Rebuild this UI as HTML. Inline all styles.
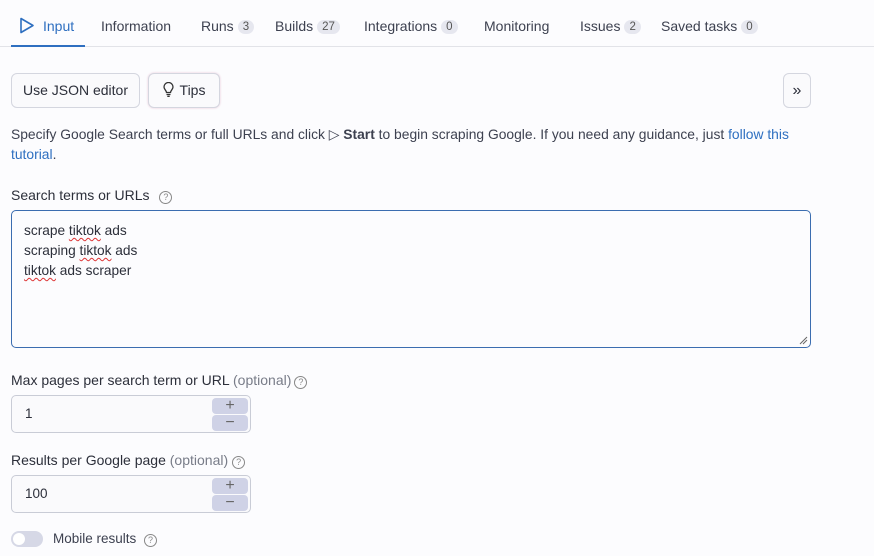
<!DOCTYPE html>
<html><head><style>
*{box-sizing:border-box;margin:0;padding:0}
body{width:874px;height:556px;background:#fcfcfe;font-family:"Liberation Sans",sans-serif;color:#2c2f3a;position:relative;overflow:hidden}
.a{position:absolute;white-space:nowrap}
.tab{font-size:14px;top:18px;color:#3d4150}
.b{display:inline-block;background:#e6e7ef;border-radius:8px;font-size:11.5px;padding:1px 5px;color:#555;margin-left:4px;vertical-align:1px}
.btn{border:1px solid #d4d6df;border-radius:6px;background:#fafafc;font-size:14px;height:35px;line-height:33px;text-align:center}
.lbl{font-size:14px;color:#2c2f3a}
.opt{color:#787c88}
.q{display:inline-block;width:13px;height:13px;border:1.3px solid #888;border-radius:50%;font-size:9px;line-height:11px;text-align:center;color:#888;vertical-align:0px;margin-left:4px}
.num{border:1px solid #c9ccd6;border-radius:5px;width:240px;height:38px;background:#fafafc}
.pm{position:absolute;right:2px;width:36px;height:16px;background:#cfd2e6;border-radius:4px;text-align:center;font-size:16px;line-height:15px;color:#666}
.sq{text-decoration:underline wavy #d33;text-decoration-thickness:1px;text-underline-offset:2px}
</style></head><body>
<svg class="a" style="left:19px;top:17px" width="16" height="17" viewBox="0 0 16 17"><path d="M2 1.5 L14 8.5 L2 15.5 Z" fill="none" stroke="#2e6fc0" stroke-width="1.6" stroke-linejoin="round"/></svg>
<div class="a tab" style="left:43px;color:#2e6fc0">Input</div>
<div class="a tab" style="left:101px">Information</div>
<div class="a tab" style="left:201px">Runs<span class="b">3</span></div>
<div class="a tab" style="left:275px">Builds<span class="b">27</span></div>
<div class="a tab" style="left:364px">Integrations<span class="b">0</span></div>
<div class="a tab" style="left:484px">Monitoring</div>
<div class="a tab" style="left:580px">Issues<span class="b">2</span></div>
<div class="a tab" style="left:661px">Saved tasks<span class="b">0</span></div>
<div class="a" style="left:0;top:46px;width:874px;height:1px;background:#e2e3e8"></div>
<div class="a" style="left:11px;top:45px;width:74px;height:2px;background:#2e6fc0"></div>

<div class="a btn" style="left:11px;top:73px;width:129px">Use JSON editor</div>
<div class="a btn" style="left:148px;top:73px;width:72px;box-shadow:0 0 2px #e8c8d8"><svg style="vertical-align:-2px;margin-right:6px" width="11" height="15" viewBox="0 0 11 15"><path d="M3.5 10.5 C3.5 8.5 1 7.5 1 5 A4.5 4.5 0 0 1 10 5 C10 7.5 7.5 8.5 7.5 10.5 Z M3.5 12.5 H7.5 M4.3 14.3 H6.7" fill="none" stroke="#333" stroke-width="1.3"/></svg>Tips</div>
<div class="a btn" style="left:783px;top:73px;width:28px;font-size:16px">»</div>

<div class="a" style="left:11px;top:126px;font-size:13.85px;color:#3d4150">Specify Google Search terms or full URLs and click ▷ <b>Start</b> to begin scraping Google. If you need any guidance, just <span style="color:#2e6fc0">follow this</span></div>
<div class="a" style="left:11px;top:146px;font-size:13.85px;color:#3d4150"><span style="color:#2e6fc0">tutorial</span>.</div>

<div class="a lbl" style="left:11px;top:187px">Search terms or URLs <span class="q" style="margin-left:6px">?</span></div>
<div class="a" style="left:11px;top:210px;width:800px;height:138px;border:1px solid #3b6db0;border-radius:5px;background:#fcfcfe"></div>
<div class="a" style="left:24px;top:221px;font-size:13.7px;line-height:20px;color:#2c2f3a">scrape <span class="sq">tiktok</span> ads<br>scraping <span class="sq">tiktok</span> ads<br><span class="sq">tiktok</span> ads scraper</div>
<svg class="a" style="left:798px;top:335px" width="10" height="10"><path d="M2 9 L9 2 M5 9 L9 5" stroke="#666" stroke-width="1"/></svg>

<div class="a lbl" style="left:11px;top:372px">Max pages per search term or URL <span class="opt">(optional)</span><span class="q" style="margin-left:3px">?</span></div>
<div class="a num" style="left:11px;top:395px"><div class="a" style="left:13px;top:10px;font-size:13.5px">1</div><div class="pm" style="top:2px">+</div><div class="pm" style="top:19px">−</div></div>

<div class="a lbl" style="left:11px;top:452px">Results per Google page <span class="opt">(optional)</span><span class="q">?</span></div>
<div class="a num" style="left:11px;top:475px"><div class="a" style="left:13px;top:10px;font-size:13.5px">100</div><div class="pm" style="top:2px">+</div><div class="pm" style="top:19px">−</div></div>

<div class="a" style="left:11px;top:531px;width:32px;height:16px;border-radius:8px;background:#d6d8e6"><div class="a" style="left:2px;top:2px;width:12px;height:12px;border-radius:50%;background:#fff"></div></div>
<div class="a" style="left:53px;top:531px;font-size:13.5px;color:#3d4150">Mobile results <span class="q">?</span></div>
</body></html>
